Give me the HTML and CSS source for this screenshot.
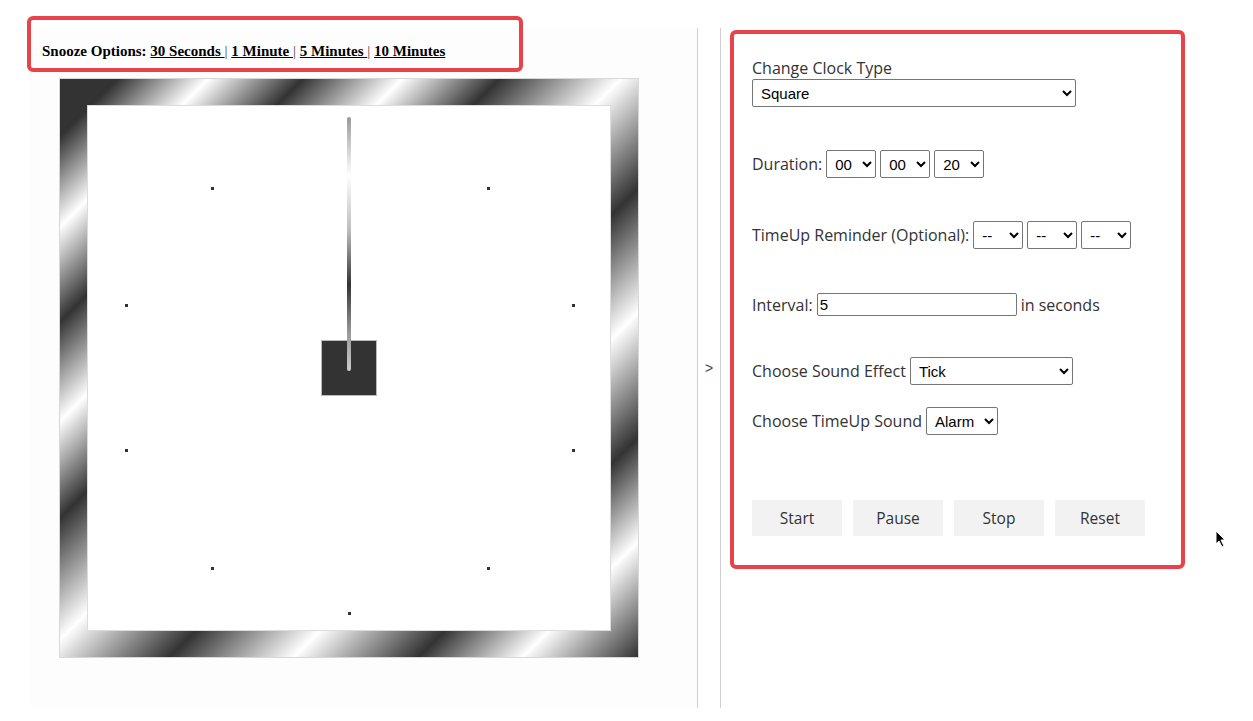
FILE: index.html
```html
<!DOCTYPE html>
<html>
<head>
<meta charset="utf-8">
<link rel="stylesheet" href="styles.css">
</head>
<body>
<div class="page">
  <section class="left">
    <div class="snooze"><b>Snooze Options:</b> <a href="#"><b>30 Seconds </b></a>| <a href="#"><b>1 Minute </b></a>| <a href="#"><b>5 Minutes </b></a>| <a href="#"><b>10 Minutes</b></a></div>
    <div class="clock">
      <div class="face">
        <span class="dot" style="left:123px;top:81px"></span>
        <span class="dot" style="left:399px;top:81px"></span>
        <span class="dot" style="left:37px;top:198px"></span>
        <span class="dot" style="left:484px;top:198px"></span>
        <span class="dot" style="left:37px;top:343px"></span>
        <span class="dot" style="left:484px;top:343px"></span>
        <span class="dot" style="left:123px;top:461px"></span>
        <span class="dot" style="left:399px;top:461px"></span>
        <span class="dot" style="left:260px;top:506px"></span>
        <div class="center"></div>
        <div class="hand"></div>
      </div>
    </div>
  </section>
  <div class="divider"><span>&gt;</span></div>
  <section class="right">
    <div class="row-block">
      <label class="lbl">Change Clock Type</label>
      <select class="sel wide"><option>Square</option></select>
    </div>
    <div class="row r-duration">
      <span class="lbl">Duration:</span>
      <select class="sel small"><option>00</option></select>
      <select class="sel small"><option>00</option></select>
      <select class="sel small"><option>20</option></select>
    </div>
    <div class="row r-reminder">
      <span class="lbl">TimeUp Reminder (Optional):</span>
      <select class="sel small"><option>--</option></select>
      <select class="sel small"><option>--</option></select>
      <select class="sel small"><option>--</option></select>
    </div>
    <div class="row r-interval">
      <span class="lbl">Interval:</span>
      <input class="txt" type="text" value="5">
      <span class="lbl">in seconds</span>
    </div>
    <div class="row r-sound">
      <span class="lbl">Choose Sound Effect</span>
      <select class="sel sound"><option>Tick</option></select>
    </div>
    <div class="row r-timeup">
      <span class="lbl">Choose TimeUp Sound</span>
      <select class="sel alarm"><option>Alarm</option></select>
    </div>
    <div class="buttons">
      <button class="btn">Start</button>
      <button class="btn">Pause</button>
      <button class="btn">Stop</button>
      <button class="btn">Reset</button>
    </div>
  </section>
</div>
<div class="mark mark-snooze"></div>
<div class="mark mark-panel"></div>
<svg class="cursor" width="12" height="19" viewBox="0 0 12 19"><path d="M1 1 L1 14 L4 11 L7 17 L9 16 L6 10 L10 10 Z" fill="#000" stroke="#fff" stroke-width="1"/></svg>
</body>
</html>
```
FILE: styles.css
```css
html, body {
  margin: 0;
  padding: 0;
  background: #fff;
}
body {
  width: 1253px;
  height: 721px;
  position: relative;
  overflow: hidden;
}
.page {
  display: flex;
  padding: 28px 0 0 30px;
  height: 680px;
}
.left {
  width: 667px;
  height: 680px;
  background: #fdfdfd;
  display: flex;
  flex-direction: column;
}
.snooze {
  font-family: "Liberation Serif", "Times New Roman", serif;
  font-size: 15px;
  margin: 15px 0 0 12px;
  line-height: 17px;
  color: #444;
}
.snooze b { color: #000; }
.snooze a { color: #000; text-decoration: underline; }
.clock {
  margin: 18px 0 0 29px;
  width: 580px;
  height: 580px;
  box-sizing: border-box;
  padding: 26px 27px 26px 27px;
  border: 1px solid #d8d8d8;
  background: linear-gradient(135deg, #333 0%, #333 5%, #fff 12.8%, #333 21%, #fff 29.6%, #333 38%, #fff 48.5%, #333 59.5%, #fff 70.2%, #333 81%, #fff 90%, #333 100%);
}
.face {
  position: relative;
  width: 100%;
  height: 100%;
  background: #fff;
  border: 1px solid #dcdcdc;
  box-sizing: border-box;
}
.dot {
  position: absolute;
  width: 3px;
  height: 3px;
  background: #333;
}
.center {
  position: absolute;
  left: 233px;
  top: 234px;
  width: 56px;
  height: 56px;
  box-sizing: border-box;
  background: #333;
  border: 1px solid #bbb;
}
.hand {
  position: absolute;
  left: 259px;
  top: 11px;
  width: 4px;
  height: 254px;
  border-radius: 2px;
  background: linear-gradient(to bottom, #999 0%, #fff 23%, #bbb 45%, #333 66%, #999 85%, #ccc 100%);
}
.divider {
  width: 22px;
  height: 680px;
  border-left: 1px solid #d0d0d0;
  border-right: 1px solid #d0d0d0;
  display: flex;
  align-items: center;
  justify-content: center;
  font-family: "Liberation Sans", Arial, sans-serif;
  font-size: 14px;
  color: #444;
}
.right {
  padding: 30px 0 0 31px;
  font-family: "Open Sans", "Noto Sans", sans-serif;
  font-size: 16px;
  color: #333;
  display: flex;
  flex-direction: column;
}
.lbl { white-space: nowrap; }
.row-block {
  display: flex;
  flex-direction: column;
  align-items: flex-start;
  line-height: 21px;
}
.row {
  display: flex;
  align-items: center;
  gap: 4px;
}
.sel {
  font-family: "Liberation Sans", Arial, sans-serif;
  font-size: 15px;
  color: #000;
  background: #fff;
  border: 1px solid #767676;
  border-radius: 2px;
  height: 28px;
  box-sizing: border-box;
  padding: 0 4px;
}
.wide { width: 324px; height: 28px; }
.small { width: 50px; }
.sound { width: 163px; }
.alarm { width: 72px; }
.r-duration { margin-top: 43px; }
.r-reminder { margin-top: 43px; }
.r-interval { margin-top: 44px; }
.r-sound { margin-top: 41px; }
.r-timeup { margin-top: 22px; }
.txt {
  width: 200px;
  height: 23px;
  box-sizing: border-box;
  border: 1px solid #767676;
  border-radius: 2px;
  font-family: "Liberation Sans", Arial, sans-serif;
  font-size: 15px;
  padding: 0 2px;
  color: #000;
}
.buttons {
  display: flex;
  gap: 11px;
  margin-top: 65px;
}
.btn {
  width: 90px;
  height: 36px;
  border: none;
  background: #f2f2f2;
  font-family: "Open Sans", "Noto Sans", sans-serif;
  font-size: 15.5px;
  color: #333;
}
.mark {
  position: absolute;
  border: 4px solid #e8434a;
  border-radius: 6px;
  box-sizing: border-box;
  pointer-events: none;
}
.mark-snooze { left: 27px; top: 16px; width: 496px; height: 56px; }
.mark-panel { left: 730px; top: 30px; width: 455px; height: 539px; }
.cursor { position: absolute; left: 1215px; top: 530px; }
```
